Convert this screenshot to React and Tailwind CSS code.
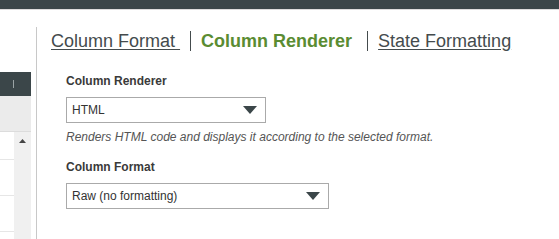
import React from "react";

function Caret() {
  return (
    <svg width="14" height="8" viewBox="0 0 14 8" className="shrink-0">
      <path d="M0 0 L14 0 L7 8 Z" fill="#3b4649" />
    </svg>
  );
}

function Select({ value, width }) {
  return (
    <div
      className={`${width} h-[26px] border border-[#aaaaaa] bg-white flex items-center justify-between pl-[5px] pr-[8px] text-[12px] text-[#333]`}
    >
      <span>{value}</span>
      <Caret />
    </div>
  );
}

export default function App() {
  return (
    <div className="w-[559px] h-[239px] overflow-hidden bg-white font-['Liberation_Sans',Arial,sans-serif]">
      {/* top bar */}
      <div className="h-[9px] bg-[#3b4649]" />
      <div className="h-px bg-[#dcdcdc]" />

      <div className="flex h-[229px]">
        {/* left grid stub */}
        <div className="w-[31px] pt-[62px] flex flex-col">
          <div className="h-[24px] bg-[#3b4649] flex items-center pl-[13px]">
            <div className="w-px h-[8px] bg-[#9aa3a5]" />
          </div>
          <div className="h-[36px] bg-[#ebebeb] border-b border-[#dcdcdc]" />
          <div className="flex flex-1">
            <div className="w-[14px] flex flex-col">
              <div className="h-[28px] border-b border-[#e6e6e6]" />
              <div className="h-[36px] border-b border-[#e6e6e6]" />
              <div className="h-[36px] border-b border-[#e6e6e6]" />
            </div>
            <div className="flex-1 bg-[#f0f0f0] flex justify-center pt-[7px]">
              <svg width="7" height="4" viewBox="0 0 7 4">
                <path d="M0 4 L7 4 L3.5 0 Z" fill="#444" />
              </svg>
            </div>
          </div>
        </div>

        {/* divider */}
        <div className="ml-[5px] mt-[17px] w-px bg-[#c8c8c8]" />

        {/* settings panel */}
        <div className="pl-[14px] pt-[21px]">
          <div className="flex items-stretch text-[18px] leading-[20px] text-[#444b4d]">
            <span className="underline underline-offset-[2px] whitespace-pre">Column Format </span>
            <span className="mx-[10px] w-px bg-[#444b4d]" />
            <span className="font-bold text-[#5a8c32] whitespace-pre">Column Renderer </span>
            <span className="mx-[10px] w-px bg-[#444b4d]" />
            <span className="underline underline-offset-[2px]">State Formatting</span>
          </div>

          <div className="pl-[15px] mt-[22px] text-[12px] leading-[16px]">
            <div className="font-bold text-[#3a3a3a]">Column Renderer</div>
            <div className="mt-[8px]">
              <Select value="HTML" width="w-[200px]" />
            </div>
            <div className="mt-[6px] italic text-[#555]">
              Renders HTML code and displays it according to the selected format.
            </div>
            <div className="mt-[14px] font-bold text-[#3a3a3a]">Column Format</div>
            <div className="mt-[8px]">
              <Select value="Raw (no formatting)" width="w-[263px]" />
            </div>
          </div>
        </div>
      </div>
    </div>
  );
}
